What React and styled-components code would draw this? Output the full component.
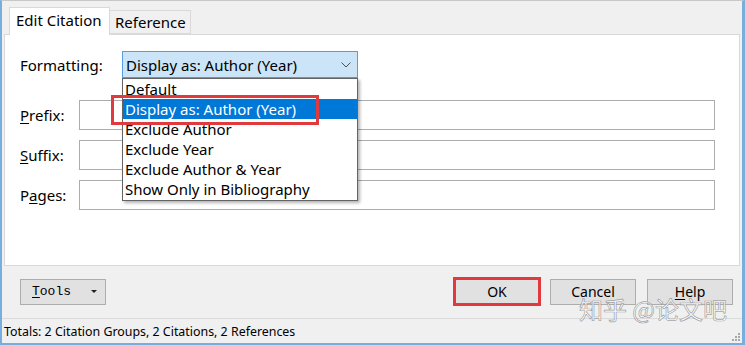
import React from 'react'
import styled, { createGlobalStyle } from 'styled-components'

const GlobalStyle = createGlobalStyle`
  html, body {
    margin: 0;
    padding: 0;
    background: #f0f0f0;
  }
  * {
    box-sizing: border-box;
  }
`

const formatOptions = [
  'Default',
  'Display as: Author (Year)',
  'Exclude Author',
  'Exclude Year',
  'Exclude Author & Year',
  'Show Only in Bibliography',
]

const fields = [
  { key: 'P', rest: 'refix:' },
  { key: 'S', rest: 'uffix:' },
  { pre: 'P', key: 'a', rest: 'ges:' },
]

function App() {
  return (
    <Window>
      <GlobalStyle />
      <TabStrip>
        <Tab active>Edit Citation</Tab>
        <Tab>Reference</Tab>
      </TabStrip>

      <TabPanel>
        <FormatRow>
          <Label>Formatting:</Label>
          <Select>
            <span>Display as: Author (Year)</span>
            <svg width="10" height="6" viewBox="0 0 10 6">
              <path d="M0.5 0.5 L5 5 L9.5 0.5" fill="none" stroke="#505050" strokeWidth="1" />
            </svg>
          </Select>
        </FormatRow>

        <Fields>
          {fields.map(f => (
            <FieldRow key={f.rest}>
              <Label>
                {f.pre}
                <u>{f.key}</u>
                {f.rest}
              </Label>
              <TextInput />
            </FieldRow>
          ))}
        </Fields>

        <DropList>
          {formatOptions.map((opt, i) => (
            <Option key={opt} selected={i === 1}>{opt}</Option>
          ))}
        </DropList>
        <Marker style={{ left: 106, top: 60, width: 208, height: 30 }} />
      </TabPanel>

      <ButtonBar>
        <ToolsButton>
          <span><u>T</u>ools</span>
          <Caret />
        </ToolsButton>
        <Spacer />
        <OkButton>OK</OkButton>
        <Button>Cancel</Button>
        <Button><u>H</u>elp</Button>
        <Watermark>知乎 @论文吧</Watermark>
      </ButtonBar>

      <StatusBar>
        Totals: 2 Citation Groups, 2 Citations, 2 References
        <Grip>
          <svg width="10" height="10" viewBox="0 0 10 10">
            {[[8, 2], [8, 5], [8, 8], [5, 5], [5, 8], [2, 8]].map(([x, y]) => (
              <rect key={`${x}-${y}`} x={x - 1} y={y - 1} width="2" height="2" fill="#a8a8a8" />
            ))}
          </svg>
        </Grip>
      </StatusBar>
    </Window>
  )
}

export default App

const uiFont = `"Noto Sans", "Open Sans", sans-serif`

const Window = styled.div`
  width: 745px;
  height: 345px;
  background: #f0f0f0;
  border-left: 2px solid #78aede;
  border-right: 3px solid #78aede;
  border-bottom: 2px solid #78aede;
  border-top: 1px solid #c8c8c8;
  display: flex;
  flex-direction: column;
  font-family: ${uiFont};
  color: #000;
  overflow: hidden;
`

const TabStrip = styled.div`
  height: 33px;
  display: flex;
  align-items: flex-end;
  padding-left: 7px;
  position: relative;
  z-index: 1;
`

const Tab = styled.div`
  height: ${p => (p.active ? '28px' : '24px')};
  padding: ${p => (p.active ? '0 6px 4px 6px' : '0 5px 0 5px')};
  margin-bottom: ${p => (p.active ? '-1px' : '0')};
  background: ${p => (p.active ? '#fff' : '#f0f0f0')};
  border: 1px solid #d9d9d9;
  border-bottom: ${p => (p.active ? 'none' : '1px solid #d9d9d9')};
  border-left: ${p => (p.active ? '1px solid #d9d9d9' : 'none')};
  font-size: 15px;
  line-height: 24px;
  display: flex;
  align-items: ${p => (p.active ? 'flex-start' : 'center')};
  width: ${p => (p.active ? '101px' : '81px')};
`

const TabPanel = styled.div`
  margin: 0 2px 0 2px;
  height: 232px;
  background: #fff;
  border: 1px solid #d9d9d9;
  position: relative;
  padding: 16px 24px 0 15px;
`

const Label = styled.div`
  font-size: 15px;
  line-height: 20px;
  width: 59px;
  flex-shrink: 0;
  white-space: nowrap;
  u {
    text-decoration-thickness: 1px;
    text-underline-offset: 2px;
  }
`

const FormatRow = styled.div`
  display: flex;
  align-items: center;
  height: 27px;
  ${Label} {
    width: 102px;
  }
`

const Select = styled.div`
  width: 236px;
  height: 27px;
  background: #cce4f7;
  border: 1px solid #569de5;
  display: flex;
  align-items: center;
  justify-content: space-between;
  padding: 0 6px 0 3px;
  font-size: 15px;
`

const Fields = styled.div`
  margin-top: 22px;
  display: flex;
  flex-direction: column;
  gap: 10px;
`

const FieldRow = styled.div`
  display: flex;
  align-items: center;
`

const TextInput = styled.div`
  flex: 1;
  height: 30px;
  border: 1px solid #acacac;
  background: #fff;
`

const DropList = styled.div`
  position: absolute;
  left: 117px;
  top: 43px;
  width: 236px;
  background: #fff;
  border: 1px solid #646464;
  box-shadow: 2px 2px 3px rgba(0, 0, 0, 0.3);
  padding: 0 0 1px 0;
  z-index: 2;
`

const Option = styled.div`
  height: 20px;
  line-height: 20px;
  padding-left: 2px;
  font-size: 15px;
  background: ${p => (p.selected ? '#0078d7' : 'transparent')};
  color: ${p => (p.selected ? '#fff' : '#000')};
  white-space: nowrap;
`

const Marker = styled.div`
  position: absolute;
  border: 3px solid #e0393e;
  z-index: 3;
`

const ButtonBar = styled.div`
  height: 52px;
  display: flex;
  align-items: center;
  gap: 11px;
  padding: 0 9px 1px 18px;
  position: relative;
`

const Spacer = styled.div`
  flex: 1;
`

const Button = styled.div`
  width: 86px;
  height: 26px;
  background: #e1e1e1;
  border: 1px solid #adadad;
  display: flex;
  align-items: center;
  justify-content: center;
  font-size: 14px;
  u {
    text-underline-offset: 2px;
  }
`

const OkButton = styled(Button)`
  width: 88px;
  height: 29px;
  margin: 0 -2px 0 0;
  border: 3px solid #e0393e;
`

const ToolsButton = styled(Button)`
  justify-content: space-between;
  padding: 0 8px 0 11px;
  font-family: "Liberation Mono", monospace;
  font-size: 13px;
`

const Caret = styled.span`
  width: 0;
  height: 0;
  border-left: 3px solid transparent;
  border-right: 3px solid transparent;
  border-top: 3px solid #202020;
`

const Watermark = styled.div`
  position: absolute;
  right: 15px;
  top: 25px;
  font-family: "Noto Sans CJK SC", sans-serif;
  font-size: 24px;
  color: rgba(255, 255, 255, 0.85);
  -webkit-text-stroke: 0.7px rgba(110, 110, 110, 0.65);
  pointer-events: none;
  z-index: 2;
`

const StatusBar = styled.div`
  flex: 1;
  border-top: 1px solid #dadada;
  display: flex;
  align-items: center;
  justify-content: space-between;
  padding: 0 0 0 2px;
  font-size: 12.4px;
  position: relative;
`

const Grip = styled.div`
  align-self: flex-end;
  display: flex;
  padding: 0 1px 1px 0;
`
